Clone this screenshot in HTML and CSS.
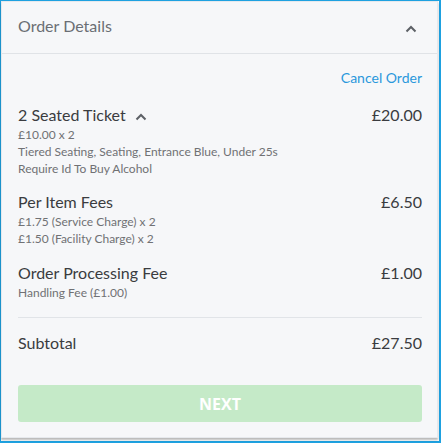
FILE: index.html
```html
<!DOCTYPE html>
<html>
<head>
<meta charset="utf-8">
<link rel="stylesheet" href="styles.css">
</head>
<body>
<div class="frame">
  <div class="card">
    <div class="header">
      <span class="header-title">Order Details</span>
      <svg class="chev" width="12" height="8" viewBox="0 0 12 8"><path d="M1.5 6.5 L6 2 L10.5 6.5" fill="none" stroke="#5d6166" stroke-width="2"/></svg>
    </div>
    <div class="body">
      <div class="cancel-row"><a class="cancel">Cancel Order</a></div>
      <div class="item first">
        <div class="item-row">
          <span class="item-title">2 Seated Ticket <svg class="chev-sm" width="12" height="8" viewBox="0 0 12 8"><path d="M1.5 6.5 L6 2 L10.5 6.5" fill="none" stroke="#5d6166" stroke-width="2"/></svg></span>
          <span class="item-price">£20.00</span>
        </div>
        <div class="sub">£10.00 x 2</div>
        <div class="sub">Tiered Seating, Seating, Entrance Blue, Under 25s</div>
        <div class="sub">Require Id To Buy Alcohol</div>
      </div>
      <div class="item">
        <div class="item-row">
          <span class="item-title">Per Item Fees</span>
          <span class="item-price">£6.50</span>
        </div>
        <div class="sub">£1.75 (Service Charge) x 2</div>
        <div class="sub">£1.50 (Facility Charge) x 2</div>
      </div>
      <div class="item last">
        <div class="item-row">
          <span class="item-title">Order Processing Fee</span>
          <span class="item-price">£1.00</span>
        </div>
        <div class="sub">Handling Fee (£1.00)</div>
      </div>
      <div class="total-row">
        <span class="item-title">Subtotal</span>
        <span class="item-price">£27.50</span>
      </div>
      <button class="next">NEXT</button>
    </div>
  </div>
</div>
</body>
</html>
```
FILE: styles.css
```css
html, body {
  margin: 0;
  padding: 0;
  background: #ffffff;
}
.frame {
  width: 441px;
  height: 443px;
  box-sizing: border-box;
  border: 1px solid #1ea1e0;
  border-right-width: 2px;
  border-bottom-width: 2px;
  background: #ffffff;
}
.card {
  width: 437px;
  height: 437px;
  box-sizing: border-box;
  border: 1px solid #e6e9ed;
  background: #f6f7f9;
  box-shadow: 0 2px 2px rgba(0,0,0,0.28);
  font-family: Lato, "Liberation Sans", sans-serif;
  color: #3a3c40;
}
.header {
  height: 52px;
  box-sizing: border-box;
  border-bottom: 1px solid #e0e3e7;
  display: flex;
  align-items: center;
  justify-content: space-between;
  padding: 0 20px 4px 16px;
}
.header-title {
  font-size: 16px;
  color: #6a6e74;
}
.chev { display: block; margin-top: 6px; }
.body {
  padding: 14px 15px 0 16px;
}
.cancel-row {
  display: flex;
  justify-content: flex-end;
  line-height: 20px;
}
.cancel {
  font-size: 14px;
  color: #2a98dc;
}
.item { margin-top: 14px; }
.item.first { margin-top: 16px; }
.item.last { margin-top: 15px; padding-bottom: 16px; border-bottom: 1px solid #e1e4e8; }
.item-row, .total-row {
  display: flex;
  justify-content: space-between;
  align-items: center;
  line-height: 22px;
}
.item-title {
  font-size: 16px;
  color: #3a3c40;
  display: flex;
  align-items: center;
}
.chev-sm { margin-left: 9px; margin-top: 3px; }
.item-price {
  font-size: 16px;
  color: #3a3c40;
}
.sub {
  font-size: 12px;
  line-height: 17px;
  color: #707174;
}
.total-row {
  margin-top: 14px;
}
.next {
  display: block;
  width: 100%;
  height: 37px;
  margin-top: 31px;
  border: none;
  border-radius: 3px;
  background: #c5eac8;
  color: #ffffff;
  font-family: "Open Sans", sans-serif;
  font-weight: 700;
  font-size: 16px;
  padding: 0;
}
```
